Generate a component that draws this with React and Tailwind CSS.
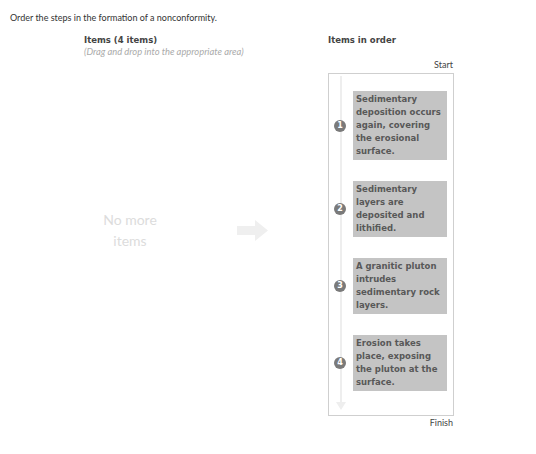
import React from 'react';

const steps = [
  'Sedimentary deposition occurs again, covering the erosional surface.',
  'Sedimentary layers are deposited and lithified.',
  'A granitic pluton intrudes sedimentary rock layers.',
  'Erosion takes place, exposing the pluton at the surface.',
];

const App = () => {
  return (
    <div className="w-[536px] h-[454px] bg-white font-['Lato',sans-serif] text-[#333] pl-[10px] pt-[12px]">
      <p className="text-[9px] leading-[12px]">Order the steps in the formation of a nonconformity.</p>

      <div className="flex mt-[10px]">
        {/* Source column */}
        <div className="w-[244px] ml-[74px] flex flex-col">
          <h3 className="font-['DejaVu_Sans',sans-serif] font-bold text-[8.5px] leading-[12px] text-[#444]">Items (4 items)</h3>
          <p className="italic text-[9.4px] leading-[11px] text-[#aaa]">(Drag and drop into the appropriate area)</p>
          <div className="flex items-center mt-[152px]">
            <div className="w-[70px] ml-[11px] text-center text-[14px] leading-[21px] text-[#dcdcdc]">No more items</div>
            <svg className="ml-[72px]" width="31" height="21" viewBox="0 0 31 21">
              <path d="M0 6 H18 V0 L31 10.5 L18 21 V15 H0 Z" fill="#efefef" />
            </svg>
          </div>
        </div>

        {/* Target column */}
        <div className="w-[126px] flex flex-col">
          <h3 className="font-['DejaVu_Sans',sans-serif] font-bold text-[8.5px] leading-[12px] text-[#444]">Items in order</h3>
          <p className="text-right text-[9px] leading-[12px] text-[#444] mt-[13px] mb-[2px] pr-[1px]">Start</p>
          <div className="relative border border-[#cfcfcf] h-[343px] pt-[17px] pl-[5px] pr-[6px]">
            <div className="absolute left-[11px] top-[2px] w-[2px] h-[330px] bg-[#eeeeee]" />
            <div className="absolute left-[7px] top-[328px] w-0 h-0 border-l-[5px] border-r-[5px] border-t-[8px] border-l-transparent border-r-transparent border-t-[#eeeeee]" />
            <div className="relative flex flex-col gap-[21px]">
              {steps.map((s, i) => (
                <div key={i} className="flex items-center gap-[7px]">
                  <div className="w-[12px] h-[12px] shrink-0 rounded-full bg-[#7a7a7a] text-white flex items-center justify-center font-['DejaVu_Sans',sans-serif] font-bold text-[8px] leading-none">
                    {i + 1}
                  </div>
                  <div className="flex-1 bg-[#c4c4c4] px-[3px] py-[2px] font-['DejaVu_Sans',sans-serif] font-bold text-[8.5px] leading-[13px] text-[#585858]">
                    {s}
                  </div>
                </div>
              ))}
            </div>
          </div>
          <p className="text-right text-[9px] leading-[12px] text-[#444] mt-[1px] pr-[1px]">Finish</p>
        </div>
      </div>
    </div>
  );
};

export default App;
